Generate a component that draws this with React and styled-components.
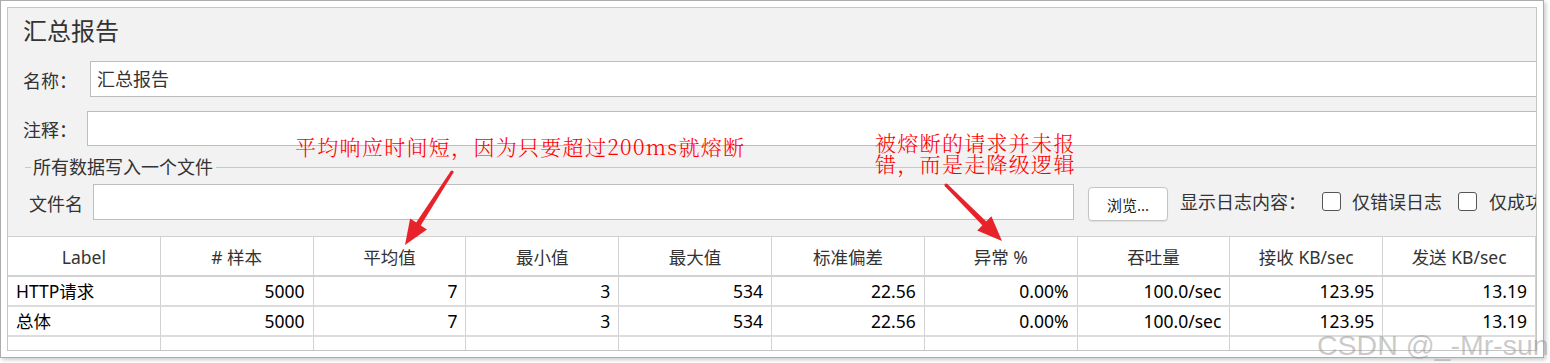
import React from "react";
import styled, { createGlobalStyle } from "styled-components";

const UI_FONT = `"Noto Sans", "Noto Sans CJK SC", sans-serif`;
const NOTE_FONT = `"Noto Serif CJK SC", "Noto Sans CJK SC", serif`;

const GlobalStyle = createGlobalStyle`
  html, body { margin: 0; padding: 0; background: #ffffff; }
  body { width: 1550px; height: 363px; overflow: hidden; font-family: ${UI_FONT}; }
`;

const Frame = styled.div`
  position: relative;
  box-sizing: border-box;
  width: 1544px;
  height: 358px;
  border: 1px solid #acacac;
  padding: 6px;
  background: #ffffff;
  box-shadow: 2px 2px 4px rgba(0, 0, 0, 0.2);
`;

const Panel = styled.div`
  box-sizing: border-box;
  height: 100%;
  border: 1px solid #c6c6c6;
  background: #f2f2f2;
  overflow: hidden;
  display: flex;
  flex-direction: column;
  font-family: ${UI_FONT};
  color: #333333;
`;

const Title = styled.div`
  flex: none;
  height: 46px;
  line-height: 46px;
  padding-left: 15px;
  font-size: 24px;
`;

const FieldRow = styled.div`
  flex: none;
  display: flex;
  align-items: ${(p) => p.$align || "center"};
  margin-top: ${(p) => p.$top}px;
  height: ${(p) => p.$h}px;
  padding-left: ${(p) => p.$pad}px;
`;

const FieldLabel = styled.span`
  flex: none;
  width: ${(p) => p.$w}px;
  font-size: 18px;
  white-space: nowrap;
  padding-top: ${(p) => p.$dy || 0}px;
`;

const TextBox = styled.div`
  box-sizing: border-box;
  height: ${(p) => p.$h}px;
  flex: ${(p) => (p.$width ? "none" : "1")};
  width: ${(p) => (p.$width ? `${p.$width}px` : "auto")};
  margin-right: ${(p) => (p.$width ? 0 : -12)}px;
  background: #ffffff;
  border: 1px solid #bdbdbd;
  padding-left: 6px;
  font-size: 18px;
  line-height: ${(p) => p.$h - 2}px;
  color: #333333;
  white-space: nowrap;
`;

const Legend = styled.div`
  flex: none;
  display: flex;
  align-items: center;
  margin-top: 10px;
  height: 22px;
  padding-left: 17px;
  font-size: 18px;
`;

const LegendLine = styled.div`
  height: 1px;
  background: #c8c8c8;
  flex: ${(p) => (p.$fill ? "1" : "none")};
  width: ${(p) => (p.$fill ? "auto" : "6px")};
`;

const LegendText = styled.span`
  padding: 0 3px 0 2px;
  white-space: nowrap;
  line-height: 22px;
`;

const BrowseButton = styled.button`
  flex: none;
  box-sizing: border-box;
  width: 80px;
  height: 34px;
  margin: 3px 0 0 14px;
  padding: 0;
  background: #ffffff;
  border: 1px solid #c4c4c4;
  border-radius: 4px;
  box-shadow: 0 1px 1px rgba(0, 0, 0, 0.08);
  font-family: ${UI_FONT};
  font-size: 15px;
  color: #222222;
`;

const InlineLabel = styled.span`
  flex: none;
  margin-left: ${(p) => p.$ml}px;
  font-size: 18px;
  line-height: 36px;
  white-space: nowrap;
`;

const CheckBox = styled.span`
  flex: none;
  box-sizing: border-box;
  width: 19px;
  height: 19px;
  margin: 8px 0 0 ${(p) => p.$ml}px;
  background: #ffffff;
  border: 1.5px solid #555555;
  border-radius: 3px;
`;

const Table = styled.div`
  flex: 1;
  margin-top: 15px;
  background: #ffffff;
  border-top: 1px solid #cfcfcf;
  display: grid;
  grid-template-columns: repeat(10, 1fr);
  grid-auto-rows: min-content;
`;

const HeadCell = styled.div`
  box-sizing: border-box;
  height: 40px;
  padding-top: 3px;
  border-right: 1px solid #d2d2d2;
  border-bottom: 2px solid #d2d2d2;
  font-size: 17.5px;
  line-height: 35px;
  text-align: center;
  color: #333333;
  white-space: nowrap;
  overflow: hidden;
`;

const Cell = styled.div`
  box-sizing: border-box;
  height: 30px;
  padding: 0 8px;
  border-right: 1px solid #d2d2d2;
  border-bottom: 2px solid #dcdcdc;
  font-size: 17.5px;
  line-height: 28px;
  text-align: ${(p) => (p.$left ? "left" : "right")};
  color: #000000;
  white-space: nowrap;
  overflow: hidden;
`;

const Note = styled.div`
  position: absolute;
  left: ${(p) => p.$x}px;
  top: ${(p) => p.$y}px;
  font-family: ${NOTE_FONT};
  font-size: 21px;
  line-height: 21px;
  letter-spacing: 1.3px;
  color: #ff0000;
  white-space: nowrap;
  font-weight: 300;
`;

const Overlay = styled.svg`
  position: absolute;
  left: -1px;
  top: -1px;
  width: 1550px;
  height: 363px;
  pointer-events: none;
  overflow: visible;
`;

const Watermark = styled.div`
  position: absolute;
  left: 1316px;
  top: 330px;
  font-family: "Liberation Sans", Arial, sans-serif;
  font-size: 28.5px;
  line-height: 28.5px;
  color: rgba(150, 150, 150, 0.5);
  white-space: nowrap;
`;

const headers = [
  "Label",
  "# 样本",
  "平均值",
  "最小值",
  "最大值",
  "标准偏差",
  "异常 %",
  "吞吐量",
  "接收 KB/sec",
  "发送 KB/sec",
];

const rows = [
  ["HTTP请求", "5000", "7", "3", "534", "22.56", "0.00%", "100.0/sec", "123.95", "13.19"],
  ["总体", "5000", "7", "3", "534", "22.56", "0.00%", "100.0/sec", "123.95", "13.19"],
  ["", "", "", "", "", "", "", "", "", ""],
];

function Arrow({ tail, tip }) {
  const dx = tip[0] - tail[0];
  const dy = tip[1] - tail[1];
  const len = Math.hypot(dx, dy);
  const ux = dx / len;
  const uy = dy / len;
  const nx = -uy;
  const ny = ux;
  const headLen = 25;
  const half = 10;
  const bx = tip[0] - ux * headLen;
  const by = tip[1] - uy * headLen;
  const sx = tip[0] - ux * (headLen - 4);
  const sy = tip[1] - uy * (headLen - 4);
  const pts = [
    [tip[0], tip[1]],
    [bx + nx * half, by + ny * half],
    [bx - nx * half, by - ny * half],
  ]
    .map((p) => p.join(","))
    .join(" ");
  const shaft = [
    [tail[0] + nx * 1.6, tail[1] + ny * 1.6],
    [sx + nx * 2.8, sy + ny * 2.8],
    [sx - nx * 2.8, sy - ny * 2.8],
    [tail[0] - nx * 1.6, tail[1] - ny * 1.6],
  ]
    .map((p) => p.join(","))
    .join(" ");
  return (
    <g fill="#e8222a">
      <circle cx={tail[0]} cy={tail[1]} r="1.6" />
      <polygon points={shaft} />
      <polygon points={pts} />
    </g>
  );
}

export default function App() {
  return (
    <>
      <GlobalStyle />
      <Frame>
        <Panel>
          <Title>汇总报告</Title>
          <FieldRow $top={7} $h={36} $pad={15}>
            <FieldLabel $w={67} $dy={1}>名称：</FieldLabel>
            <TextBox $h={36}>汇总报告</TextBox>
          </FieldRow>
          <FieldRow $top={14} $h={35} $pad={15}>
            <FieldLabel $w={64} $dy={1}>注释：</FieldLabel>
            <TextBox $h={35} />
          </FieldRow>
          <Legend>
            <LegendLine />
            <LegendText>所有数据写入一个文件</LegendText>
            <LegendLine $fill />
          </Legend>
          <FieldRow $top={6} $h={37} $pad={21} $align="flex-start">
            <FieldLabel $w={64} $dy={6}>文件名</FieldLabel>
            <TextBox $h={36} $width={981} />
            <BrowseButton type="button">浏览...</BrowseButton>
            <InlineLabel $ml={12}>显示日志内容：</InlineLabel>
            <CheckBox $ml={16} />
            <InlineLabel $ml={11}>仅错误日志</InlineLabel>
            <CheckBox $ml={16} />
            <InlineLabel $ml={12}>仅成功日志</InlineLabel>
          </FieldRow>
          <Table>
            {headers.map((h) => (
              <HeadCell key={h}>{h}</HeadCell>
            ))}
            {rows.map((r, i) =>
              r.map((v, j) => (
                <Cell key={`${i}-${j}`} $left={j === 0}>
                  {v}
                </Cell>
              ))
            )}
          </Table>
        </Panel>
        <Note $x={294} $y={135}>平均响应时间短，因为只要超过200ms就熔断</Note>
        <Note $x={874} $y={131}>
          被熔断的请求并未报
          <br />
          错，而是走降级逻辑
        </Note>
        <Overlay viewBox="0 0 1550 363">
          <Arrow tail={[452, 172]} tip={[405, 245]} />
          <Arrow tail={[946, 185]} tip={[1002, 241]} />
        </Overlay>
        <Watermark>CSDN @_-Mr-sun</Watermark>
      </Frame>
    </>
  );
}
